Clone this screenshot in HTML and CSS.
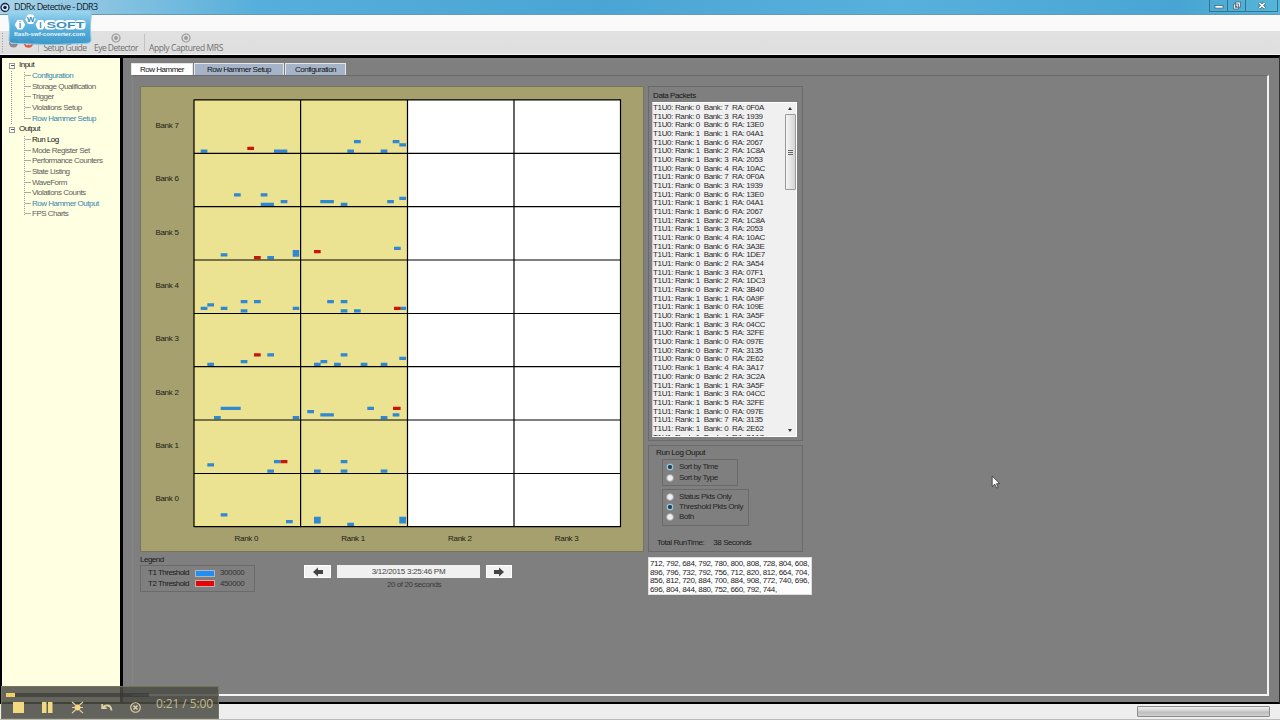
FILE: index.html
```html
<!DOCTYPE html>
<html lang="en">
<head>
<meta charset="utf-8">
<title>DDRx Detective - DDR3</title>
<link rel="stylesheet" href="styles.css">
</head>
<body>
<div class="window">
  <header class="titlebar">
    <svg class="app-icon" width="10" height="11" viewBox="0 0 10 11"><circle cx="5" cy="5.5" r="4" fill="#dceaf5" stroke="#15254a" stroke-width="1.3"/><circle cx="5" cy="5.5" r="1.8" fill="#15254a"/></svg>
    <span class="title">DDRx Detective - DDR3</span>
    <div class="controls">
      <span class="ctl"><svg width="10" height="9" viewBox="0 0 10 9"><rect x="1" y="4.5" width="8" height="2.6" fill="#fff" stroke="#4a6777" stroke-width=".8"/></svg></span>
      <span class="ctl"><svg width="10" height="9" viewBox="0 0 10 9"><path d="M3.5 1h5v5.2h-5zM1.500 3h5v5h-5z" fill="#eee" stroke="#4a6777" stroke-width=".8"/><rect x="3.200" y="4.700" width="1.800" height="1.800" fill="#4a6777"/></svg></span>
      <span class="ctl close"><svg width="10" height="9" viewBox="0 0 10 9"><path d="M2.200 1.800l5.600 5.400M7.800 1.800l-5.600 5.400" stroke="#4a6777" stroke-width="3.200"/><path d="M2.400 2l5.200 5M7.600 2l-5.200 5" stroke="#fff" stroke-width="1.700"/></svg></span>
    </div>
  </header>
  <div class="menubar"></div>
  <div class="toolbar">
    <svg class="tool-left" width="40" height="24" viewBox="0 0 40 24"><path d="M2.500 2v20" stroke="#999" stroke-dasharray="1 1.6"/><circle cx="13.500" cy="12" r="4.500" fill="#8c8c8c"/><path d="M11 12h5" stroke="#eee" stroke-width="1.500"/><circle cx="28.500" cy="12" r="4.800" fill="#dd5b3d"/><path d="M26.500 10l4 4m0-4l-4 4" stroke="#fff" stroke-width="1.200"/><path d="M38.500 3v18" stroke="#c4c4c4"/></svg>
    <div class="tool guide"><span class="blank"></span><span>Setup Guide</span></div>
    <div class="tool eye"><svg width="10" height="10" viewBox="0 0 10 10"><circle cx="5" cy="5" r="4" fill="#ddd" stroke="#999" stroke-width="1.2"/><circle cx="5" cy="5" r="1.9" fill="#999"/></svg><span>Eye Detector</span></div>
    <i class="sep"></i>
    <div class="tool mrs"><svg width="10" height="10" viewBox="0 0 10 10"><circle cx="5" cy="5" r="4" fill="#ddd" stroke="#999" stroke-width="1.2"/><circle cx="5" cy="5" r="1.9" fill="#999"/></svg><span>Apply Captured MRS</span></div>
  </div>
  <div class="main">
    <nav class="tree">
      <div class="root"><i class="box"></i>Input</div>
      <ul class="branch trunk">
        <li class="link">Configuration</li><li>Storage Qualification</li><li>Trigger</li><li>Violations Setup</li><li class="link">Row Hammer Setup</li>
      </ul>
      <div class="root"><i class="box"></i>Output</div>
      <ul class="branch">
        <li class="strong">Run Log</li><li>Mode Register Set</li><li>Performance Counters</li><li>State Listing</li><li>WaveForm</li><li>Violations Counts</li><li class="link">Row Hammer Output</li><li>FPS Charts</li>
      </ul>
    </nav>
    <section class="content">
      <div class="tabs"><span class="tab t1 active">Row Hammer</span><span class="tab t2">Row Hammer Setup</span><span class="tab t3">Configuration</span></div>
      <div class="page">
        <div class="left-col">
          <div class="chart">
            <div class="banks"><span>Bank 7</span><span>Bank 6</span><span>Bank 5</span><span>Bank 4</span><span>Bank 3</span><span>Bank 2</span><span>Bank 1</span><span>Bank 0</span></div>
            <div class="plot-col">
              <svg class="plot" width="429" height="429" viewBox="193 99 429 429">
                <rect x="194" y="100" width="213.5" height="426.5" fill="#ebe391"/>
                <rect x="407.5" y="100" width="213" height="426.5" fill="#fff"/>
                <g fill="#3088d2">
                  <path d="M200.7 149.5h6.7v3.3h-6.7zM274 149.5h13.3v3.3h-13.3zM354 140h6.7v3.3h-6.7zM347.3 149.5h6.7v3.3h-6.7zM380.7 149.5h6.7v3.3h-6.7zM392.7 140h6.7v3.3h-6.7zM399.3 143.3h6.7v3.3h-6.7z"/>
                  <path d="M234 193.3h6.7v3.3h-6.7zM260.7 193.3h6.7v3.3h-6.7zM260.7 202.7h13.3v3.3h-13.3zM280.7 200h6.7v3.3h-6.7zM320.3 200h13.6v3.3h-13.6zM340.7 202.7h6.7v3.3h-6.7zM387.2 200h6.7v3.3h-6.7zM399.3 196.7h6.7v3.3h-6.7z"/>
                  <path d="M220.7 253.3h6.7v3.3h-6.7zM267.3 256h6.7v3.3h-6.7zM292.7 250h6.5v6.7h-6.5zM394 246.7h6.7v3.3h-6.7z"/>
                  <path d="M200.7 306.7h6.7v3.3h-6.7zM207.3 303.3h6.7v3.3h-6.7zM220.7 306.7h6.7v3.3h-6.7zM240.7 300h6.7v3.3h-6.7zM254 300h6.7v3.3h-6.7zM240.7 309.3h6.7v3.3h-6.7zM292.7 306.7h6.5v3.3h-6.5zM327.2 300h6.7v3.3h-6.7zM340.7 300h6.7v3.3h-6.7zM340.7 309.3h6.7v3.3h-6.7zM354 309.3h6.7v3.3h-6.7zM400.7 306.7h5.3v3.3h-5.3z"/>
                  <path d="M207.3 362.7h6.7v3.3h-6.7zM240.7 360h6.7v3.3h-6.7zM267.3 353.3h6.7v3.3h-6.7zM314 362.7h6.7v3.3h-6.7zM320.5 360h6.7v3.3h-6.7zM334 362.7h6.7v3.3h-6.7zM340.7 353.3h6.7v3.3h-6.7zM360.7 362.7h6.7v3.3h-6.7zM380.7 362.7h6.7v3.3h-6.7zM399.3 356.7h6.7v3.3h-6.7z"/>
                  <path d="M220.7 406.7h20v3.3h-20zM214 416h6.7v3.3h-6.7zM292.7 416h6.5v3.3h-6.5zM307.3 410h6.7v3.3h-6.7zM320.3 413.3h13.6v3.3h-13.6zM367.3 406.7h6.7v3.3h-6.7zM392.7 413.3h6.7v3.3h-6.7zM380.7 416h6.7v3.3h-6.7z"/>
                  <path d="M207.3 463.3h6.7v3.3h-6.7zM274 460h6.7v3.3h-6.7zM267.3 469.4h6.7v3.3h-6.7zM314 469.4h6.7v3.3h-6.7zM340.7 469.4h6.7v3.3h-6.7zM340.7 460h6.7v3.3h-6.7zM380.7 469.4h6.7v3.3h-6.7z"/>
                  <path d="M220.7 513.3h6.7v3.3h-6.7zM286 520h6.7v3.3h-6.7zM314 516.7h6.7v6.7h-6.7zM347.3 522.7h6.7v3.3h-6.7zM399.3 516.7h6.7v6.7h-6.7z"/>
                </g>
                <path fill="#c9150b" d="M247.3 146.7h6.7v3.3h-6.7zM254 256h6.7v3.3h-6.7zM314 250h6.7v3.3h-6.7zM394 306.7h6.7v3.3h-6.7zM254 353.3h6.7v3.3h-6.7zM393 406.7h7.6v3.3h-7.6zM280.7 460h6.7v3.3h-6.7z"/>
                <path fill="none" stroke="#000" stroke-width="1.2" d="M194 99.9h427M194 153.4h427M194 206.6h427M194 260h427M194 313.5h427M194 366.6h427M194 420h427M194 473.5h427M194 526.6h427M194 99.5v427.5M300.6 99.5v427.5M407.5 99.5v427.5M514 99.5v427.5M620.5 99.5v427.5"/>
              </svg>
              <div class="ranks"><span>Rank 0</span><span>Rank 1</span><span>Rank 2</span><span>Rank 3</span></div>
            </div>
          </div>
          <div class="under">
            <div class="legend-wrap">
              <div class="legend-title">Legend</div>
              <div class="legend">
                <div class="leg-row"><span>T1 Threshold</span><i class="sw blue"></i><b>300000</b></div>
                <div class="leg-row"><span>T2 Threshold</span><i class="sw red"></i><b>450000</b></div>
              </div>
            </div>
            <div class="stepper">
              <div class="step-row">
                <span class="btn"><svg width="12" height="10" viewBox="0 0 12 10"><path d="M1 5l5-4.500V3h5v4H6v2.500z" fill="#444"/></svg></span>
                <span class="time">3/12/2015 3:25:46 PM</span>
                <span class="btn next"><svg width="12" height="10" viewBox="0 0 12 10"><path d="M11 5L6 .5V3H1v4h5v2.500z" fill="#444"/></svg></span>
              </div>
              <div class="of">20 of 20 seconds</div>
            </div>
          </div>
        </div>
        <div class="right-col">
          <div class="group packets">
            <div class="label">Data Packets</div>
            <div class="list">
<pre>T1U0: Rank: 0  Bank: 7  RA: 0F0A
T1U0: Rank: 0  Bank: 3  RA: 1939
T1U0: Rank: 0  Bank: 6  RA: 13E0
T1U0: Rank: 1  Bank: 1  RA: 04A1
T1U0: Rank: 1  Bank: 6  RA: 2067
T1U0: Rank: 1  Bank: 2  RA: 1C8A
T1U0: Rank: 1  Bank: 3  RA: 2053
T1U0: Rank: 0  Bank: 4  RA: 10AC
T1U1: Rank: 0  Bank: 7  RA: 0F0A
T1U1: Rank: 0  Bank: 3  RA: 1939
T1U1: Rank: 0  Bank: 6  RA: 13E0
T1U1: Rank: 1  Bank: 1  RA: 04A1
T1U1: Rank: 1  Bank: 6  RA: 2067
T1U1: Rank: 1  Bank: 2  RA: 1C8A
T1U1: Rank: 1  Bank: 3  RA: 2053
T1U1: Rank: 0  Bank: 4  RA: 10AC
T1U1: Rank: 0  Bank: 6  RA: 3A3E
T1U1: Rank: 1  Bank: 6  RA: 1DE7
T1U1: Rank: 0  Bank: 2  RA: 3A54
T1U1: Rank: 1  Bank: 3  RA: 07F1
T1U1: Rank: 1  Bank: 2  RA: 1DC3
T1U1: Rank: 0  Bank: 2  RA: 3B40
T1U1: Rank: 1  Bank: 1  RA: 0A9F
T1U1: Rank: 1  Bank: 0  RA: 109E
T1U0: Rank: 1  Bank: 1  RA: 3A5F
T1U0: Rank: 1  Bank: 3  RA: 04CC
T1U0: Rank: 1  Bank: 5  RA: 32FE
T1U0: Rank: 1  Bank: 0  RA: 097E
T1U0: Rank: 0  Bank: 7  RA: 3135
T1U0: Rank: 0  Bank: 0  RA: 2E62
T1U0: Rank: 1  Bank: 4  RA: 3A17
T1U0: Rank: 0  Bank: 2  RA: 3C2A
T1U1: Rank: 1  Bank: 1  RA: 3A5F
T1U1: Rank: 1  Bank: 3  RA: 04CC
T1U1: Rank: 1  Bank: 5  RA: 32FE
T1U1: Rank: 1  Bank: 0  RA: 097E
T1U1: Rank: 1  Bank: 7  RA: 3135
T1U1: Rank: 1  Bank: 0  RA: 2E62
T1U1: Rank: 1  Bank: 4  RA: 3A17</pre>
              <div class="scroll">
                <i class="up"></i><div class="thumb"><i></i><i></i><i></i></div><i class="down"></i>
              </div>
            </div>
          </div>
          <div class="group runlog">
            <div class="label">Run Log Ouput</div>
            <div class="radios sort"><div><i class="radio on"></i>Sort by Time</div><div><i class="radio"></i>Sort by Type</div></div>
            <div class="radios kind"><div><i class="radio"></i>Status Pkts Only</div><div><i class="radio on"></i>Threshold Pkts Only</div><div><i class="radio"></i>Both</div></div>
            <div class="total"><span>Total RunTime:</span><span>38 Seconds</span></div>
          </div>
<pre class="counts">712, 792, 684, 792, 780, 800, 808, 728, 804, 608,
896, 796, 732, 792, 756, 712, 820, 812, 664, 704,
856, 812, 720, 884, 700, 884, 908, 772, 740, 696,
696, 804, 844, 880, 752, 660, 792, 744,</pre>
        </div>
      </div>
    </section>
  </div>
  <footer class="status"><div class="progress"></div></footer>

  <svg class="logo" width="86" height="36" viewBox="0 0 86 36">
    <defs><linearGradient id="lg" x1="0" y1="0" x2="0" y2="1"><stop offset="0" stop-color="#a4d8ef"/><stop offset=".45" stop-color="#5db4df"/><stop offset="1" stop-color="#3191c6" stop-opacity=".92"/></linearGradient></defs>
    <path d="M5 .8Q43 -1 81 .8Q84.800 1 84.300 5Q82.500 18 84 29Q84.500 33 80 33.300Q43 36 6 33.300Q1.500 33 2 29Q3.500 18 1.500 5Q1.200 1 5 .8z" fill="url(#lg)" stroke="#8ccbe8" stroke-width="1"/>
    <g fill="#fff"><path d="M10.500 10h5l2.800 4.800-2.800 4.800h-5l-2.800-4.800zM21 4.500h5l2.800 4.700-2.800 4.700h-5l-2.800-4.700zM31 10h5l2.500 4.800-2.500 4.800h-5l-2.500-4.800z"/><rect x="38" y="10" width="10.500" height="9.600" rx="2.500"/><rect x="48" y="10" width="10.500" height="9.600" rx="4"/><rect x="58" y="10" width="10.500" height="9.600" rx="2.500"/><rect x="68" y="10" width="10.500" height="9.600" rx="3.500"/></g>
    <g fill="#3b8fbd" class="logo-text"><text x="11.800" y="17.800">i</text><text x="20" y="12" textLength="7.500" lengthAdjust="spacingAndGlyphs">w</text><text x="32.300" y="17.800">I</text><text x="39.500" y="17.800" textLength="38" lengthAdjust="spacingAndGlyphs">SOFT</text></g>
    <text class="logo-url" x="7" y="26" textLength="71" lengthAdjust="spacingAndGlyphs">flash-swf-converter.com</text>
  </svg>

  <svg class="cursor" width="10" height="14" viewBox="0 0 10 14"><path d="M1.200 1v10.500l2.600-2.300 1.900 3.900 1.500-.7-1.800-3.700h3.300z" fill="#fff" stroke="#333" stroke-width=".8"/></svg>

  <div class="player">
    <div class="track"><i></i></div>
    <div class="player-row">
      <svg width="150" height="20" viewBox="0 0 150 20">
        <g fill="#f3da80"><rect x="12" y="5" width="11" height="11"/><rect x="41" y="5" width="4.500" height="11"/><rect x="47" y="5" width="4.500" height="11"/></g>
        <g stroke="#ded3a0" stroke-width="1.100" fill="none"><path d="M71 5l3.500 3M82 5l-3.500 3M71 16l3.500-3M82 16l-3.500-3M71 10.500h3M79 10.500h3"/><path d="M101.200 7v4.200h4.500M102 10.500q2-2.500 5-2t3.500 5" stroke-width="1.800"/><circle cx="134.500" cy="10.500" r="4.800"/><path d="M132.500 8.500l4 4m0-4l-4 4" stroke-width="1.500"/></g>
        <circle cx="76.500" cy="10.500" r="3" fill="#f3da80"/>
      </svg>
      <span class="clock">0:21 / 5:00</span>
    </div>
  </div>
</div>
</body>
</html>
```
FILE: styles.css
```css
* { box-sizing: border-box; }
body { margin: 0; width: 1280px; height: 720px; overflow: hidden; }
.window {
  position: relative; width: 1280px; height: 720px; display: flex; flex-direction: column;
  font-family: "Liberation Sans", sans-serif; font-size: 8px; line-height: 10px; letter-spacing: -.5px;
  color: #222; background: #7f7f7f; white-space: nowrap;
}
pre { margin: 0; font: inherit; }
i, b { font-style: normal; font-weight: normal; }
svg { display: block; flex: none; }

.titlebar { height: 15px; flex: none; display: flex; align-items: center; border-bottom: 1px solid #6e98b0;
  background: linear-gradient(90deg, #a9d4e8 0, #8ec6e2 90px, #55aedb 260px, #4ba5d4 600px, #58b0dc 900px, #48a5d3 1180px, #55b6d8 1280px); }
.app-icon { margin-top: 1px; }
.title { font: 9px/12px "Open Sans", sans-serif; color: #10202c; margin-left: 4px; letter-spacing: -.6px; }
.controls { display: flex; margin-left: auto; margin-right: 2px; height: 12px; align-self: flex-start; border: 1px solid #35748f; border-top: 0; }
.ctl { width: 18px; display: flex; align-items: center; justify-content: center; border-right: 1px solid #35748f; }
.ctl.close { width: 31px; border: 0; }
.menubar { height: 16px; flex: none; background: #fafafa; }
.toolbar { height: 24px; flex: none; display: flex; background: linear-gradient(#e1e1e1, #dedede); border-bottom: 1px solid #f3f3f3;
  font: 8.5px/10px "Open Sans", sans-serif; color: #707070; }
.tool { display: flex; flex-direction: column; align-items: center; padding-top: 2px; flex: none; }
.blank { height: 10px; }
.guide { width: 50px; }
.eye { width: 52px; letter-spacing: -.55px; }
.mrs { width: 80px; letter-spacing: -.4px; }
.sep { width: 1px; margin: 3px 1px 3px 2px; background: #c2c2c2; }

.main { height: 649px; flex: none; display: flex; border-top: 3px solid #000; border-bottom: 2px solid #000; border-left: 2px solid #000; border-right: 1px solid #333; }
.tree { width: 118px; flex: none; background: #ffffe1; padding: 2.3px 0 0 7px; line-height: 10.67px; }
.root { display: flex; align-items: center; height: 10.67px; color: #222; }
.box { width: 6px; height: 6px; margin-right: 4px; border: 1px solid #999; background: linear-gradient(#555, #555) center / 3px 1px no-repeat #fff; }
.branch { list-style: none; margin: 0; padding: 0 0 0 23px; color: #606060; position: relative; }
.branch::before { content: ""; position: absolute; left: 15px; top: 1px; bottom: 5px; border-left: 1px dotted #999; }
.trunk::after { content: ""; position: absolute; left: 2px; top: 0; bottom: 0; border-left: 1px dotted #999; }
.branch li { height: 10.67px; }
.branch li::before { content: ""; display: inline-block; width: 6px; height: 1px; margin-left: -7px; margin-right: 1px; vertical-align: 2px; background: #aaa; }
.branch .link { color: #3585ad; }
.branch .strong { color: #111; }

.content { flex: 1; border-left: 3px solid #000; background: #7f7f7f; padding: 5px 10px 6px 8px; display: flex; flex-direction: column; }
.tabs { display: flex; gap: 1px; height: 12px; flex: none; }
.tab { height: 12px; line-height: 11px; text-align: center; background: #a5b4c8; border: 1px solid #e6e6e6; border-bottom: 0; border-radius: 1px 1px 0 0; color: #111; }
.tab.active { background: #fff; }
.t1 { width: 62px; } .t2 { width: 90px; } .t3 { width: 61px; }
.page { flex: 1; display: flex; align-items: flex-start; gap: 4px; margin-left: 1px; padding: 10px 0 0 7px; border-top: 1px solid #6b6b6b; border-left: 1px solid #858585; border-right: 2px solid #f4f4f4; border-bottom: 2px solid #f4f4f4; }

.left-col { width: 504px; flex: none; }
.chart { height: 466px; display: flex; background: #a5a06e; border: 1px solid #77745c; padding-top: 12px; }
.banks { width: 52px; flex: none; display: flex; flex-direction: column; color: #1c1c14; letter-spacing: -.3px; }
.banks span { height: 53.33px; line-height: 54px; text-align: center; }
.ranks { width: 427px; display: flex; padding-top: 5.5px; color: #1c1c14; letter-spacing: -.25px; }
.ranks span { flex: 1; text-align: center; }
.under { display: flex; padding-top: 3px; }
.legend-wrap { width: 115px; margin-right: 49px; }
.legend-title { height: 10px; line-height: 10px; color: #1b1b1b; }
.legend { height: 27px; border: 1px solid #6a6a6a; padding: 2px 0 0 7px; }
.leg-row { display: flex; align-items: center; height: 10.5px; color: #1b1b1b; }
.leg-row span { width: 47px; }
.leg-row b { margin-left: 5px; color: #333; letter-spacing: -.4px; }
.sw { width: 20px; height: 7px; border: 1px solid #b5b5b5; }
.blue { background: #1f8ff8; } .red { background: #e80404; }
.stepper { width: 208px; padding-top: 10px; }
.step-row { display: flex; height: 13px; }
.btn { width: 27px; display: flex; align-items: center; justify-content: center; background: #f2f2f2; border: 1px solid #fff; }
.btn.next { width: 26px; }
.time { flex: 1; margin: 0 6px; background: #f0f0f0; text-align: center; line-height: 13px; color: #444; letter-spacing: -.25px; }
.of { margin-left: 12px; margin-top: 2px; width: 196px; text-align: center; color: #3a3a3a; line-height: 10px; letter-spacing: -.42px; }

.right-col { width: 164px; flex: none; }
.group { width: 155px; border: 1px solid #6a6a6a; }
.packets { height: 355px; padding: 4px 0 0 4px; }
.label { height: 10px; line-height: 10px; color: #161616; letter-spacing: -.4px; }
.list { height: 335px; width: 145px; margin-left: -1px; margin-top: 1px; background: #f0f0f0; border: 1px solid #fff; border-left-color: #ccc; overflow: hidden; display: flex; justify-content: space-between; }
.list pre { line-height: 8.675px; letter-spacing: -.355px; padding-top: 1px; color: #2a2a2a; height: 333px; overflow: hidden; }
.scroll { width: 12px; display: flex; flex-direction: column; align-items: center; padding: 4px 0; }
.up, .down { border: 2.5px solid transparent; width: 0; height: 0; }
.up { border-top: 0; border-bottom: 3px solid #333; }
.down { border-bottom: 0; border-top: 3px solid #333; margin-top: auto; }
.thumb { width: 11px; height: 76px; margin-top: 4px; border: 1px solid #999; border-radius: 1px; background: linear-gradient(90deg, #f5f5f5, #d5d5d5); display: flex; flex-direction: column; align-items: center; justify-content: center; gap: 1px; }
.thumb i { width: 5px; height: 1px; background: #666; }
.runlog { height: 107px; margin-top: 4px; padding: 2px 0 0 7px; color: #202020; }
.radios { border: 1px solid #6a6a6a; margin-left: 6px; padding-left: 3px; color: #262626; }
.radios div { display: flex; align-items: center; }
.sort { width: 76px; height: 27px; margin-top: 1px; padding-top: 1px; }
.sort div { height: 11.5px; }
.kind { width: 87px; height: 37px; margin-top: 3px; padding-top: 2px; letter-spacing: -.42px; }
.kind div { height: 10.2px; }
.radio { flex: none; width: 8px; height: 8px; margin-right: 5px; border-radius: 50%; border: 1px solid #9a9a9a; background: #eee; }
.radio.on { background: radial-gradient(circle, #103048 0, #24536e 1.8px, #dcecf4 2.8px); border-color: #7e95a0; }
.total { display: flex; gap: 9px; margin: 12px 0 0 1px; letter-spacing: -.44px; }
.counts { margin-top: 5px; height: 38px; width: 164px; background: #fdfdfd; border: 1px solid #ddd; padding: 2px 0 0 1px; line-height: 8.67px; letter-spacing: -.34px; color: #222; }

.status { height: 16px; flex: none; background: #eee; border-bottom: 1px solid #bbb; padding: 2px 10px 0 0; display: flex; justify-content: flex-end; }
.progress { width: 133px; height: 11px; border: 1px solid #8c8c8c; border-radius: 1px; background: linear-gradient(#efefef, #d0d0d0 45%, #bdbdbd 55%, #cfcfcf); }

.logo { position: absolute; left: 7px; top: 10px; letter-spacing: 0; }
.logo-text { font: bold 8.5px "Liberation Sans", sans-serif; }
.logo-url { font: bold 5px "Liberation Sans", sans-serif; fill: #eaf7fd; }
.cursor { position: absolute; left: 991px; top: 475px; }
.player { position: absolute; left: 1px; top: 686px; width: 218px; height: 33px; padding: 6px 0 0 4px; background: rgba(76, 76, 70, .86); border: 1px solid #77745c; }
.track { width: 143px; height: 4px; background: rgba(50, 50, 50, .6); }
.track i { display: block; width: 9px; height: 4px; background: #efcf6a; }
.player-row { display: flex; margin-left: -5px; }
.clock { font: 12px/14px "Open Sans", sans-serif; color: #c5b987; margin-left: 5px; letter-spacing: -.1px; }
```
